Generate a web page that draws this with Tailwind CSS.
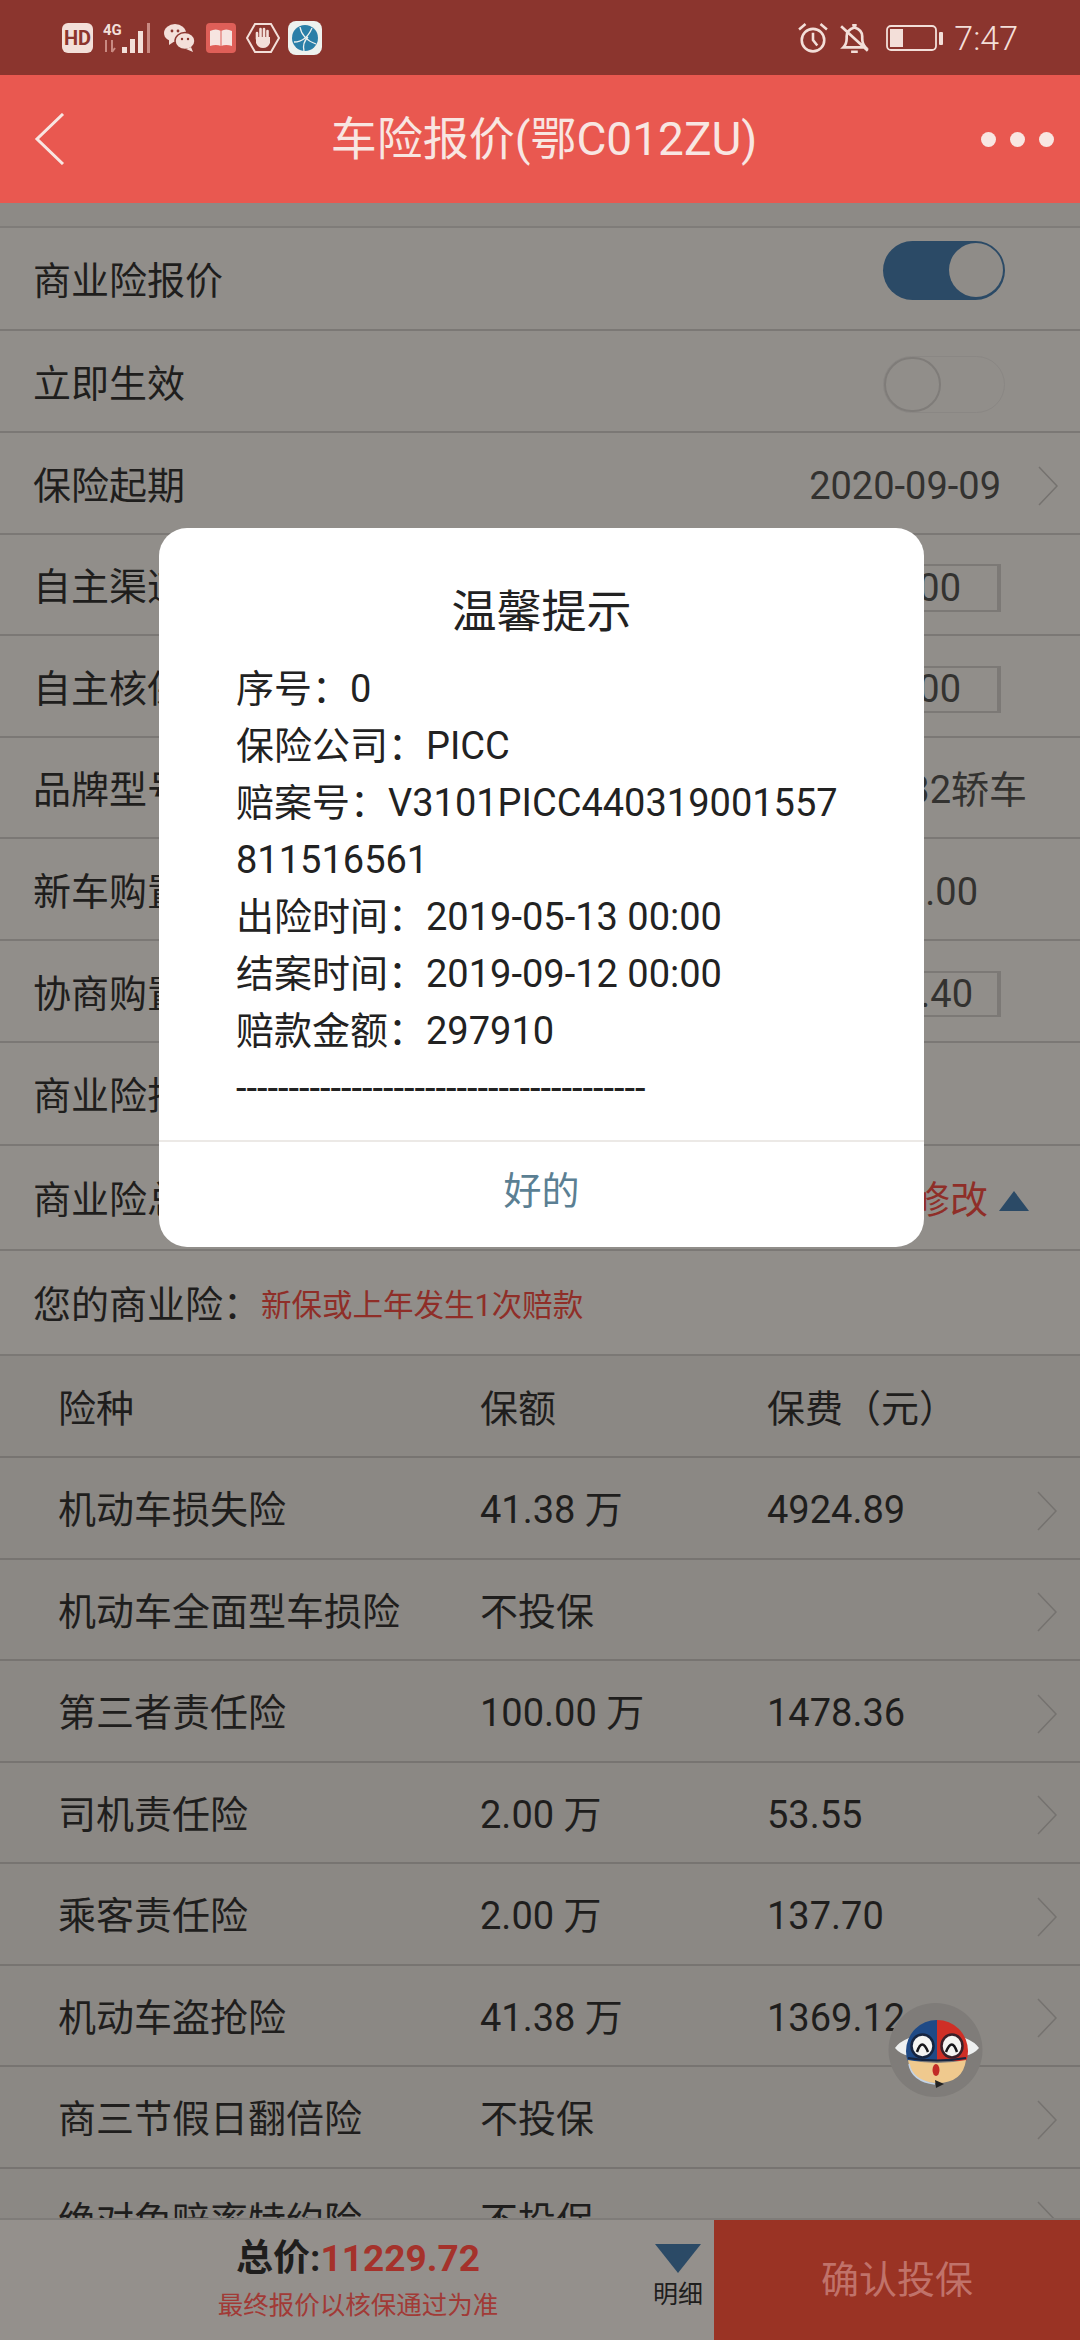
<!DOCTYPE html>
<html lang="zh-CN">
<head>
    <meta charset="UTF-8">
    <meta name="viewport" content="width=device-width, initial-scale=1.0">
    <title>车险报价</title>
    <script src="https://cdn.jsdelivr.net/npm/@tailwindcss/browser@4"></script>
</head>
<body>
<div class="relative flex flex-col w-[1080px] h-[2340px] overflow-hidden bg-[#918e8a] text-[38px] text-[#1f1e1d] font-[family-name:Roboto,'Noto_Sans_CJK_SC',sans-serif]">

    <!-- status bar -->
    <div class="flex items-center justify-between h-[75px] shrink-0 bg-[#8b352e] pl-[62px] pr-[62px] text-[#f3dfd9]">
        <div class="flex items-center">
            <div class="flex items-center justify-center w-[31px] h-[30px] rounded-[6px] bg-[#f3dfd9] text-[#8b352e] text-[20px] font-bold leading-none">HD</div>
            <svg class="ml-[10px]" width="50" height="32" viewBox="0 0 50 32">
                <text x="0" y="13" font-size="15" font-weight="700" fill="#f3dfd9" font-family="Roboto">4G</text>
                <path d="M3 18v12M9 18v12M9 30l3-4" stroke="#c98a82" stroke-width="2" fill="none"/>
                <rect x="19" y="25" width="5" height="6" fill="#f3dfd9"/>
                <rect x="27" y="17" width="5" height="14" fill="#f3dfd9"/>
                <rect x="35" y="9" width="5" height="22" fill="#f3dfd9"/>
                <rect x="44" y="1" width="3" height="30" fill="#c98a82"/>
            </svg>
            <svg class="ml-[11px]" width="32" height="32" viewBox="0 0 32 32">
                <ellipse cx="11" cy="11" rx="11" ry="9" fill="#f3dfd9"/>
                <path d="M5 17l0 6 6-4z" fill="#f3dfd9"/>
                <ellipse cx="21" cy="19" rx="10" ry="8.5" fill="#f3dfd9" stroke="#8b352e" stroke-width="1.5"/>
                <path d="M27 25l2 5-7-3z" fill="#f3dfd9"/>
                <circle cx="8" cy="9" r="1.4" fill="#8b352e"/><circle cx="14" cy="9" r="1.4" fill="#8b352e"/>
                <circle cx="18" cy="17" r="1.2" fill="#8b352e"/><circle cx="24" cy="17" r="1.2" fill="#8b352e"/>
            </svg>
            <svg class="ml-[10px]" width="30" height="30" viewBox="0 0 30 30">
                <rect width="30" height="30" rx="4" fill="#df5f58"/>
                <path d="M4 8q6-3 11 0q5-3 11 0v15q-6-2-11 0q-5-2-11 0z" fill="#f6e4e0"/>
                <path d="M15 8v15" stroke="#df5f58" stroke-width="1"/>
            </svg>
            <svg class="ml-[10px]" width="34" height="32" viewBox="0 0 34 32">
                <path d="M9 2h16l8 14-8 14H9L1 16z" fill="none" stroke="#f3dfd9" stroke-width="2"/>
                <path d="M11 17v-6M14.500 15V7M18 15V7M21.500 15V9" stroke="#f3dfd9" stroke-width="2.600" stroke-linecap="round"/>
                <path d="M10 15h14v6q-2 5-7 5t-7-5z" fill="#f3dfd9"/>
            </svg>
            <svg class="ml-[8px]" width="34" height="34" viewBox="0 0 34 34">
                <rect width="34" height="34" rx="8" fill="#eef1ee"/>
                <circle cx="17" cy="17" r="13" fill="#2b7fa8"/>
                <path d="M6 21q12 0 18-14M12 6q2 12 16 17M16 30q-2-8 4-14" stroke="#eef1ee" stroke-width="1.300" fill="none"/>
            </svg>
        </div>
        <div class="flex items-center">
            <svg width="30" height="30" viewBox="1 1 28 28" fill="none" stroke="#f3dfd9" stroke-width="2.400">
                <circle cx="15" cy="17" r="10.500"/>
                <path d="M15 10v7l4 5M2 7l6-5M28 7l-6-5"/>
            </svg>
            <svg class="ml-[12px]" width="30" height="30" viewBox="2 1 27 27" fill="none" stroke="#f3dfd9" stroke-width="2.400">
                <path d="M5 23q3-3 3-8v-2q0-6 7-8q7 2 7 8v2q0 5 3 8zM12 27h6M13 3h4M3 4l24 22"/>
            </svg>
            <svg class="ml-[16px]" width="58" height="28" viewBox="0 0 58 28">
                <rect x="1" y="2" width="49" height="24" rx="4" fill="none" stroke="#f3dfd9" stroke-width="1.800"/>
                <rect x="4" y="5" width="13" height="18" fill="#f3dfd9"/>
                <rect x="53" y="8" width="4" height="13" rx="1" fill="#f3dfd9"/>
            </svg>
            <span class="ml-[10px] text-[34px] font-light leading-none">7:47</span>
        </div>
    </div>

    <!-- title bar -->
    <div class="grid grid-cols-[1fr_auto_1fr] items-center h-[128px] shrink-0 bg-[#e95850] pl-[34px] pr-[26px] text-[#f8e6e2]">
        <svg width="31" height="52" viewBox="0 0 31 52" fill="none" stroke="#f8e6e2" stroke-width="3">
            <path d="M29 1L3 26l26 25"/>
        </svg>
        <div class="text-[46px] leading-none">车险报价(鄂C012ZU)</div>
        <div class="flex justify-end gap-[14px]">
            <span class="w-[15px] h-[15px] rounded-full bg-[#f8e6e2]"></span>
            <span class="w-[15px] h-[15px] rounded-full bg-[#f8e6e2]"></span>
            <span class="w-[15px] h-[15px] rounded-full bg-[#f8e6e2]"></span>
        </div>
    </div>

    <!-- form -->
    <div class="flex-1 overflow-hidden">
        <div class="h-[25px] bg-[#8d8a86] border-b-2 border-[#7f7c79]"></div>

        <div class="flex items-center justify-between h-[103px] pt-[6px] pl-[33px] pr-[75px] border-b-2 border-[#7b7875]">
            <span>商业险报价</span>
            <div class="flex items-center justify-end w-[122px] h-[59px] mb-[23px] pr-[2px] rounded-full bg-[#2b4a66]">
                <div class="w-[54px] h-[54px] rounded-full bg-[#8f8c88]"></div>
            </div>
        </div>
        <div class="flex items-center justify-between h-[102px] pt-[6px] pl-[33px] pr-[75px] border-b-2 border-[#7b7875]">
            <span>立即生效</span>
            <div class="w-[122px] h-[57px] rounded-full border border-[#8a8784]">
                <div class="w-[57px] h-[55px] rounded-full bg-[#918e8a] border-2 border-[#7f7c79]"></div>
            </div>
        </div>
        <div class="flex items-center justify-between h-[102px] pt-[6px] pl-[33px] pr-[22px] border-b-2 border-[#7b7875] text-[#333230]">
            <span class="text-[#1f1e1d]">保险起期</span>
            <div class="flex items-center gap-[37px]">
                <span>2020-09-09</span>
                <svg width="20" height="40" viewBox="0 0 20 40" fill="none" stroke="#75726f" stroke-width="1.500"><path d="M1 1l18 19L1 39"/></svg>
            </div>
        </div>
        <div class="flex items-center justify-between h-[101px] pt-[6px] pl-[33px] pr-[79px] border-b-2 border-[#7b7875]">
            <span>自主渠道系数</span>
            <div class="w-[200px] h-[48px] pr-[36px] border-2 border-r-4 border-[#7c7976] text-right text-[#333230] leading-[44px]">1.00</div>
        </div>
        <div class="flex items-center justify-between h-[102px] pt-[6px] pl-[33px] pr-[79px] border-b-2 border-[#7b7875]">
            <span>自主核保系数</span>
            <div class="w-[200px] h-[47px] pr-[36px] border-2 border-r-4 border-[#7c7976] text-right text-[#333230] leading-[43px]">1.00</div>
        </div>
        <div class="flex items-center justify-between h-[101px] pt-[6px] pl-[33px] pr-[53px] border-b-2 border-[#7b7875]">
            <span>品牌型号</span>
            <span class="text-[#333230]">32轿车</span>
        </div>
        <div class="flex items-center justify-between h-[102px] pt-[6px] pl-[33px] pr-[102px] border-b-2 border-[#7b7875]">
            <span>新车购置价</span>
            <span class="text-[#333230]">0.00</span>
        </div>
        <div class="flex items-center justify-between h-[102px] pt-[6px] pl-[33px] pr-[79px] border-b-2 border-[#7b7875]">
            <span>协商购置价</span>
            <div class="w-[200px] h-[46px] pr-[24px] border-2 border-r-4 border-[#7c7976] text-right text-[#333230] leading-[42px]">0.40</div>
        </div>
        <div class="flex items-center h-[103px] pt-[6px] pl-[33px] border-b-2 border-[#7b7875]">
            <span>商业险折扣</span>
        </div>
        <div class="flex items-center justify-between h-[105px] pt-[6px] pl-[33px] pr-[51px] border-b-2 border-[#7b7875]">
            <span>商业险总价</span>
            <div class="flex items-center gap-[11px] text-[#8f2e28]">
                <span>修改</span>
                <svg width="30" height="20" viewBox="0 0 30 20"><path d="M15 0l15 20H0z" fill="#2b4a66"/></svg>
            </div>
        </div>
        <div class="flex items-center h-[105px] pt-[6px] pl-[33px] border-b-2 border-[#7b7875]">
            <span>您的商业险：</span>
            <span class="text-[30.500px] text-[#8f2e28]">新保或上年发生1次赔款</span>
        </div>

        <!-- coverage table -->
        <div class="bg-[#8b8884]">
            <div class="grid grid-cols-[422px_287px_270px_20px] items-center h-[102px] pt-[6px] pl-[58px] border-b-2 border-[#777471]">
                <span>险种</span><span>保额</span><span>保费（元）</span>
            </div>
            <div class="grid grid-cols-[422px_287px_270px_20px] items-center h-[101.500px] pt-[6px] pl-[58px] border-b-2 border-[#777471]">
                <span>机动车损失险</span><span>41.38 万</span><span>4924.89</span>
                <svg width="20" height="40" viewBox="0 0 20 40" fill="none" stroke="#75726f" stroke-width="1.500"><path d="M1 1l18 19L1 39"/></svg>
            </div>
            <div class="grid grid-cols-[422px_287px_270px_20px] items-center h-[101.500px] pt-[6px] pl-[58px] border-b-2 border-[#777471]">
                <span>机动车全面型车损险</span><span>不投保</span><span></span>
                <svg width="20" height="40" viewBox="0 0 20 40" fill="none" stroke="#75726f" stroke-width="1.500"><path d="M1 1l18 19L1 39"/></svg>
            </div>
            <div class="grid grid-cols-[422px_287px_270px_20px] items-center h-[101.500px] pt-[6px] pl-[58px] border-b-2 border-[#777471]">
                <span>第三者责任险</span><span>100.00 万</span><span>1478.36</span>
                <svg width="20" height="40" viewBox="0 0 20 40" fill="none" stroke="#75726f" stroke-width="1.500"><path d="M1 1l18 19L1 39"/></svg>
            </div>
            <div class="grid grid-cols-[422px_287px_270px_20px] items-center h-[101.500px] pt-[6px] pl-[58px] border-b-2 border-[#777471]">
                <span>司机责任险</span><span>2.00 万</span><span>53.55</span>
                <svg width="20" height="40" viewBox="0 0 20 40" fill="none" stroke="#75726f" stroke-width="1.500"><path d="M1 1l18 19L1 39"/></svg>
            </div>
            <div class="grid grid-cols-[422px_287px_270px_20px] items-center h-[101.500px] pt-[6px] pl-[58px] border-b-2 border-[#777471]">
                <span>乘客责任险</span><span>2.00 万</span><span>137.70</span>
                <svg width="20" height="40" viewBox="0 0 20 40" fill="none" stroke="#75726f" stroke-width="1.500"><path d="M1 1l18 19L1 39"/></svg>
            </div>
            <div class="grid grid-cols-[422px_287px_270px_20px] items-center h-[101.500px] pt-[6px] pl-[58px] border-b-2 border-[#777471]">
                <span>机动车盗抢险</span><span>41.38 万</span><span>1369.12</span>
                <svg width="20" height="40" viewBox="0 0 20 40" fill="none" stroke="#75726f" stroke-width="1.500"><path d="M1 1l18 19L1 39"/></svg>
            </div>
            <div class="grid grid-cols-[422px_287px_270px_20px] items-center h-[101.500px] pt-[6px] pl-[58px] border-b-2 border-[#777471]">
                <span>商三节假日翻倍险</span><span>不投保</span><span></span>
                <svg width="20" height="40" viewBox="0 0 20 40" fill="none" stroke="#75726f" stroke-width="1.500"><path d="M1 1l18 19L1 39"/></svg>
            </div>
            <div class="grid grid-cols-[422px_287px_270px_20px] items-center h-[101.500px] pt-[6px] pl-[58px] border-b-2 border-[#777471]">
                <span>绝对免赔率特约险</span><span>不投保</span><span></span>
                <svg width="20" height="40" viewBox="0 0 20 40" fill="none" stroke="#75726f" stroke-width="1.500"><path d="M1 1l18 19L1 39"/></svg>
            </div>
        </div>
    </div>

    <!-- footer -->
    <div class="flex h-[122px] shrink-0 bg-[#94908c] border-t-2 border-[#7f7c79]">
        <div class="flex flex-1 items-start">
            <div class="flex flex-col items-center w-[642px] pl-[74px] pt-[17px]">
                <div class="text-[37px] font-bold leading-[44px]">总价:<span class="text-[#a5322b]">11229.72</span></div>
                <div class="mt-[7px] text-[25.500px] leading-[34px] text-[#a13a36]">最终报价以核保通过为准</div>
            </div>
            <div class="flex flex-col items-center w-[72px] pt-[24px]">
                <svg width="46" height="29" viewBox="0 0 46 29"><path d="M0 0h46L23 29z" fill="#2b4a66"/></svg>
                <span class="mt-[7px] text-[25px] leading-[30px]">明细</span>
            </div>
        </div>
        <div class="flex items-center justify-center w-[366px] bg-[#9a3324] text-[#c0726a]">确认投保</div>
    </div>

    <!-- floating mascot -->
    <svg class="absolute left-[885px] top-[2000px]" width="100" height="100" viewBox="0 0 100 100">
        <circle cx="50.500" cy="50" r="47" fill="#7f7c79"/>
        <path d="M24 38q-10 4-14 10q5 6 14 8zM80 38q10 4 14 10q-5 6-14 8z" fill="#eef0f0"/>
        <path d="M52 20a31 31 0 0 0-31 31q0 6 2 10h29z" fill="#1f4a86"/>
        <path d="M52 20a31 31 0 0 1 31 31q0 6-2 10H52z" fill="#cf2f26"/>
        <path d="M23 60q29 6 58 0q-3 23-29 23t-29-23z" fill="#efc98e"/>
        <ellipse cx="37.500" cy="46" rx="11" ry="11.500" fill="#f4f4f2" stroke="#16243f" stroke-width="2.500"/>
        <ellipse cx="67" cy="46" rx="10.500" ry="11.500" fill="#f4f4f2" stroke="#3a1f28" stroke-width="2.500"/>
        <path d="M23 58q29 5 58 0" fill="none" stroke="#16243f" stroke-width="2"/>
        <path d="M32 52q5-15 11 0M61 52q6-15 11 0" fill="none" stroke="#16161a" stroke-width="2.500"/>
        <ellipse cx="51" cy="70" rx="3.500" ry="6" fill="#c22b26"/>
        <path d="M24 64q3 17 26 20" fill="none" stroke="#c3d3e6" stroke-width="1.500"/>
        <path d="M50 80l9 4-8 4z" fill="#222"/>
    </svg>

    <!-- dialog -->
    <div class="absolute left-[159px] top-[528px] w-[765px] h-[719px] flex flex-col rounded-[28px] bg-white text-[#222]">
        <div class="pt-[57px] text-center text-[45px] leading-[56px]">温馨提示</div>
        <div class="mt-[20px] pl-[77px] pr-[77px] leading-[57px] break-all">
            <div>序号：0</div>
            <div>保险公司：PICC</div>
            <div>赔案号：V3101PICC440319001557811516561</div>
            <div>出险时间：2019-05-13 00:00</div>
            <div>结案时间：2019-09-12 00:00</div>
            <div>赔款金额：297910</div>
            <div>---------------------------------------</div>
        </div>
        <div class="flex flex-1 items-center justify-center mt-[23px] pb-[6px] border-t-2 border-[#ece9e6] text-[#5b7f93]">好的</div>
    </div>
</div>
</body>
</html>
